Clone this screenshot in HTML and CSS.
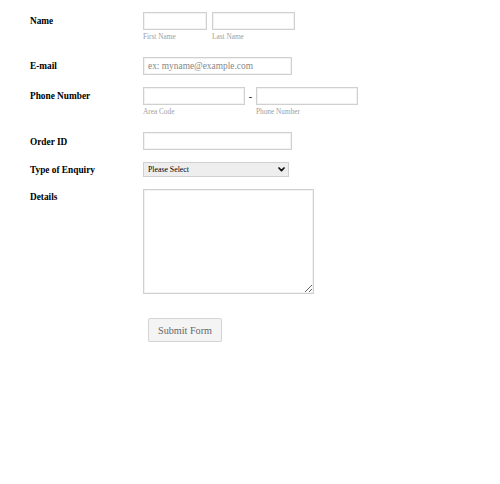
FILE: index.html
```html
<!DOCTYPE html>
<html>
<head>
<meta charset="utf-8">
<link rel="stylesheet" href="styles.css">
</head>
<body>
<form class="form">
  <div class="row">
    <label class="label">Name</label>
    <div class="field">
      <div class="group">
        <div class="sub">
          <input class="input w-first" type="text">
          <span class="sublabel">First Name</span>
        </div>
        <div class="sub">
          <input class="input w-last" type="text">
          <span class="sublabel">Last Name</span>
        </div>
      </div>
    </div>
  </div>
  <div class="row">
    <label class="label">E-mail</label>
    <div class="field">
      <input class="input w-wide" type="text" placeholder="ex: myname@example.com">
    </div>
  </div>
  <div class="row">
    <label class="label">Phone Number</label>
    <div class="field">
      <div class="group phone">
        <div class="sub">
          <input class="input w-phone" type="text">
          <span class="sublabel">Area Code</span>
        </div>
        <span class="dash">-</span>
        <div class="sub">
          <input class="input w-phone" type="text">
          <span class="sublabel">Phone Number</span>
        </div>
      </div>
    </div>
  </div>
  <div class="row">
    <label class="label label-low">Order ID</label>
    <div class="field">
      <input class="input w-wide" type="text">
    </div>
  </div>
  <div class="row">
    <label class="label label-sel">Type of Enquiry</label>
    <div class="field">
      <div class="select-wrap">
        <select class="select">
          <option>Please Select</option>
        </select>
        <svg class="chevron" width="7" height="5" viewBox="0 0 7 5" aria-hidden="true">
          <path d="M1 1 L3.5 3.6 L6 1" fill="none" stroke="#111" stroke-width="1.7" stroke-linecap="round" stroke-linejoin="round"/>
        </svg>
      </div>
    </div>
  </div>
  <div class="row row-details">
    <label class="label label-det">Details</label>
    <div class="field">
      <textarea class="textarea"></textarea>
    </div>
  </div>
  <div class="actions">
    <button class="button" type="button">Submit Form</button>
  </div>
</form>
</body>
</html>
```

FILE: styles.css
```css
html, body {
  margin: 0;
  padding: 0;
  background: #fff;
}
body {
  font-family: "Liberation Serif", "Times New Roman", "DejaVu Serif", serif;
  color: #000;
}
.form {
  display: flex;
  flex-direction: column;
  padding: 12px 0 0 30px;
}
.row {
  display: flex;
  align-items: flex-start;
  margin-bottom: 12px;
}
.label {
  width: 113px;
  flex: none;
  font-size: 9.3px;
  font-weight: bold;
  line-height: 18px;
}
.label-low {
  padding-top: 2px;
  line-height: 16px;
}
.label-sel {
  line-height: 14px;
  padding-top: 1px;
}
.label-det {
  line-height: 16px;
}
.field {
  display: flex;
}
.group {
  display: flex;
  gap: 5px;
}
.phone {
  gap: 0;
}
.sub {
  display: flex;
  flex-direction: column;
}
.sublabel {
  font-size: 7.3px;
  color: #a0a0a0;
  line-height: 9px;
  height: 15px;
  padding-top: 2px;
  box-sizing: border-box;
}
.dash {
  width: 11px;
  text-align: center;
  font-size: 10px;
  line-height: 18px;
  padding-top: 1px;
}
.input,
.select,
.textarea,
.button {
  font-family: "Liberation Serif", "Times New Roman", "DejaVu Serif", serif;
}
.input {
  box-sizing: border-box;
  height: 18px;
  margin: 0;
  border: 1px solid #d0d0d0;
  box-shadow: inset 0 0 0 1px #f2f2f2;
  padding: 0 4px;
  font-size: 9.4px;
  color: #333;
  background: #fff;
  outline: none;
}
.input::placeholder {
  color: #888;
}
.w-first { width: 64px; }
.w-last { width: 83px; }
.w-wide { width: 149px; }
.w-phone { width: 102px; }
.select-wrap {
  position: relative;
  display: flex;
}
.select {
  box-sizing: border-box;
  width: 146px;
  height: 15px;
  margin: 0;
  padding: 0 4px;
  border: 1px solid #d0d0d0;
  border-radius: 0;
  background: #eee;
  -webkit-appearance: none;
  appearance: none;
  font-size: 7.8px;
  color: #000;
  outline: none;
}
.chevron {
  position: absolute;
  right: 4px;
  top: 5px;
  pointer-events: none;
}
.textarea {
  box-sizing: border-box;
  width: 171px;
  height: 105px;
  margin: 0;
  border: 1px solid #d0d0d0;
  box-shadow: inset 0 0 0 1px #f2f2f2;
  padding: 4px;
  font-size: 9.4px;
  display: block;
  resize: both;
}
.actions {
  display: flex;
  padding: 12px 0 0 118px;
}
.button {
  box-sizing: border-box;
  width: 74px;
  height: 24px;
  margin: 0;
  border: 1px solid #d4d4d4;
  border-radius: 2px;
  background: #f4f4f4;
  box-shadow: 0 1px 1px rgba(0,0,0,0.06);
  font-size: 10.2px;
  color: #666;
  padding: 0;
}
```
